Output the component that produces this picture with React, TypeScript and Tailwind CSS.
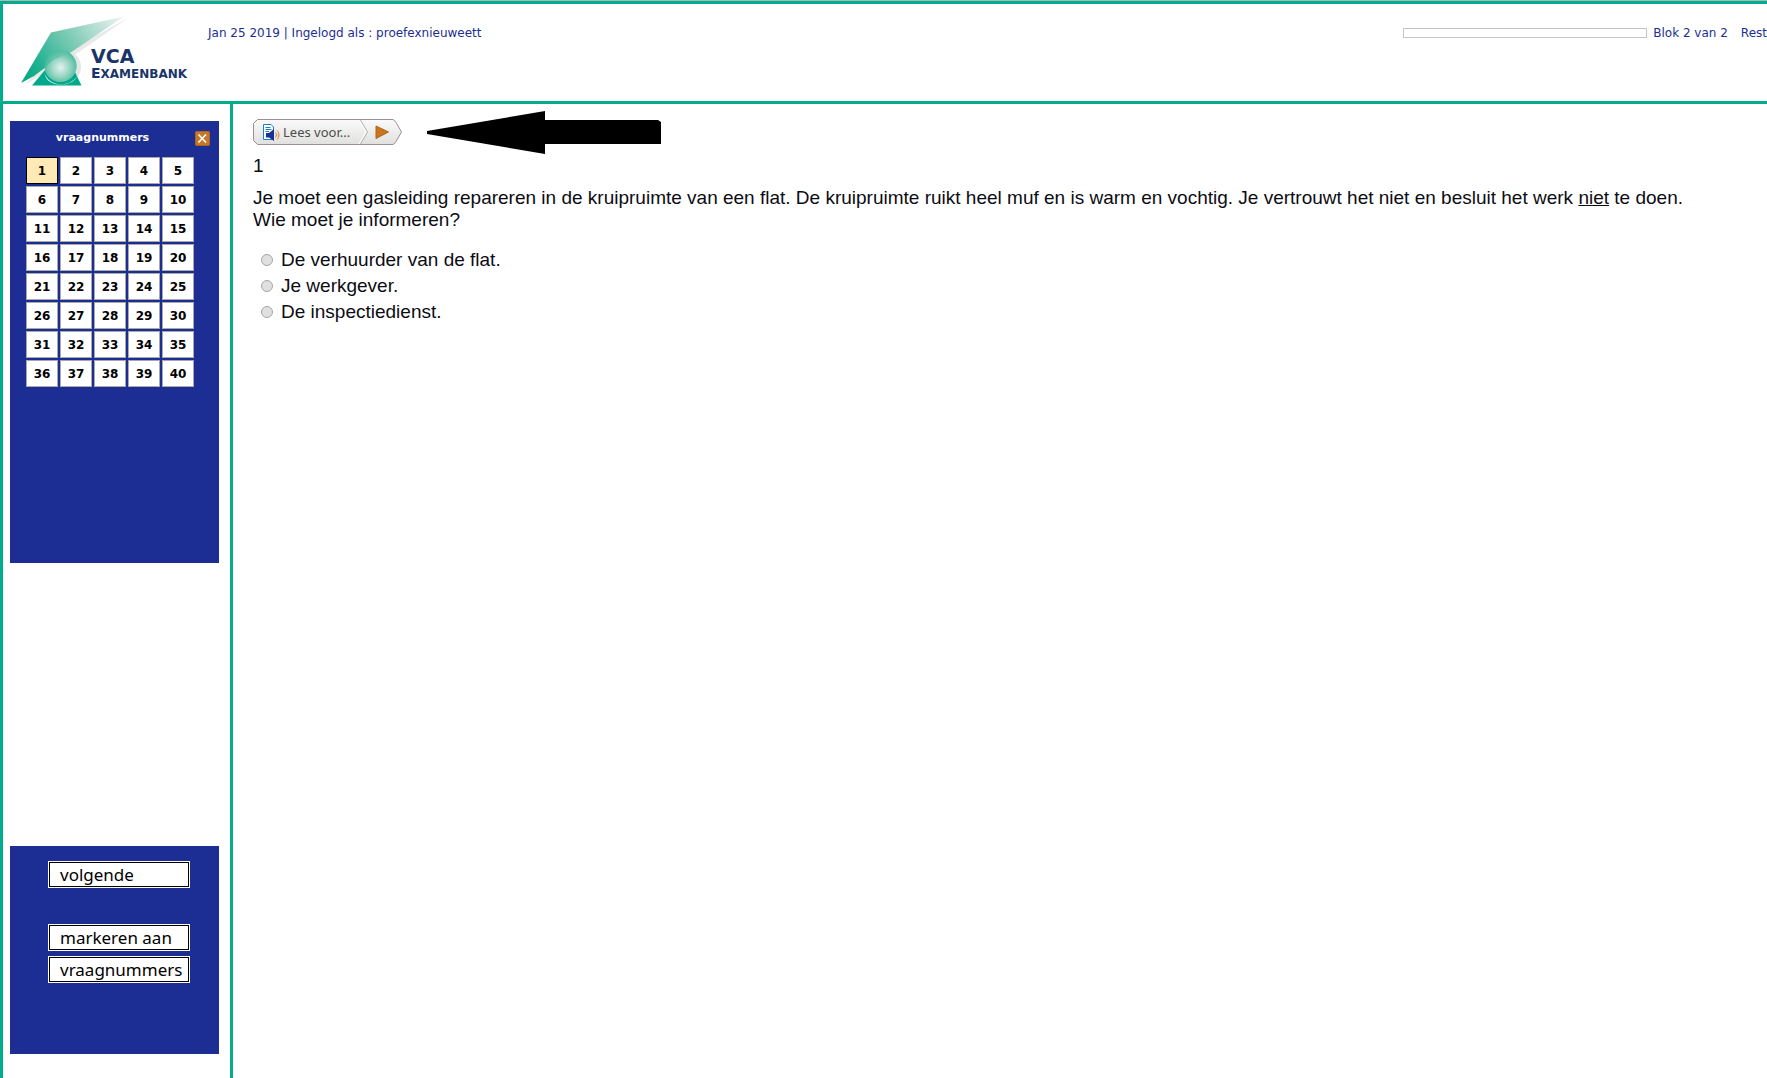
import { useState } from "react";

const questionNumbers = Array.from({ length: 40 }, (_, i) => i + 1);

const answers = [
  "De verhuurder van de flat.",
  "Je werkgever.",
  "De inspectiedienst.",
];

function Logo() {
  return (
    <svg
      role="img"
      aria-label="VCA Examenbank"
      width="176"
      height="78"
      viewBox="16 12 176 78"
      className="block shrink-0"
    >
      <defs>
        <linearGradient id="roof" gradientUnits="userSpaceOnUse" x1="24" y1="82" x2="120" y2="14">
          <stop offset="0" stopColor="#00a884" />
          <stop offset="0.2" stopColor="#22b292" />
          <stop offset="0.5" stopColor="#74c8b0" />
          <stop offset="0.8" stopColor="#bfe2d8" />
          <stop offset="1" stopColor="#eef5f3" />
        </linearGradient>
        <radialGradient id="ball" cx="0.5" cy="0.55" r="0.55">
          <stop offset="0" stopColor="#e2f3ee" />
          <stop offset="0.5" stopColor="#9dd6c5" />
          <stop offset="1" stopColor="#45b99d" />
        </radialGradient>
      </defs>
      <path d="M25 84.500 L45 64 L128 18 L79 52 L38 77 Z" fill="#e9e9e9" />
      <circle cx="64" cy="67" r="17" fill="#e2e7e6" />
      <path d="M32 85.500 L45 70 H74 L81.500 85.500 Z" fill="#00a98a" />
      <path d="M44 72 C49 88 72 89 80 72 L77 77 C71 87 52 87 46 78 Z" fill="#d5ece6" />
      <circle cx="60.500" cy="66" r="16" fill="url(#ball)" />
      <path d="M21 83 L51 32.500 L124 16.500 L73 51 C66 56 53 57 46 67 L34 76 Z" fill="url(#roof)" />
      <circle cx="60.500" cy="66" r="16" fill="url(#ball)" opacity="0.5" />
      <g fill="#1b3468" fontFamily="'DejaVu Sans', sans-serif">
        <text x="91" y="63" fontSize="19" fontWeight="700">VCA</text>
        <text x="91" y="78" fontSize="14" fontWeight="700">
          E<tspan fontSize="12">XAMENBANK</tspan>
        </text>
      </g>
    </svg>
  );
}

function Header() {
  return (
    <header className="flex h-[103px] items-start overflow-hidden border-y-3 border-[#00ae8e] pt-2 pl-[13px] text-[#1c2e93]">
      <Logo />
      <p className="mt-[13px] ml-[16px] text-[12px] leading-4 whitespace-nowrap">
        Jan 25 2019 | Ingelogd als : proefexnieuweett
      </p>
      <div className="mt-[13px] ml-auto flex items-center text-[12px] leading-4 whitespace-nowrap">
        <div
          role="progressbar"
          aria-label="Voortgang"
          aria-valuenow={0}
          className="mr-[6px] h-[10px] w-[244px] border border-[#c4c4c4]"
        />
        <span>Blok 2 van 2</span>
        <span className="ml-[13px]">Rest</span>
      </div>
    </header>
  );
}

function NumberPanel({ current, onSelect }: { current: number; onSelect: (n: number) => void }) {
  return (
    <section className="h-[442px] bg-[#1c2e93] pt-[9px]">
      <div className="flex items-center pr-[9px] text-white">
        <h2 className="flex-1 text-center text-[11px] leading-4 font-bold">vraagnummers</h2>
        <button type="button" aria-label="Sluiten" className="size-[15px] rounded-[2px] bg-[#c47828]">
          <svg viewBox="0 0 15 15" className="size-[15px]" fill="none">
            <rect x="0.500" y="0.500" width="14" height="14" rx="2" stroke="#a86420" />
            <path d="M3.500 3.500 L11 11.500 M11 3.500 L3.500 11.500" stroke="#fff" strokeWidth="1.600" />
          </svg>
        </button>
      </div>
      <div className="mt-[11px] ml-4 grid w-[168px] grid-cols-5 gap-[2px]">
        {questionNumbers.map((n) => (
          <button
            key={n}
            type="button"
            onClick={() => onSelect(n)}
            className={
              n === current
                ? "h-[27px] border border-black bg-[#ffe9b5] text-[12px] leading-4 font-bold text-black"
                : "h-[27px] border border-[#a9a9a9] bg-white text-[12px] leading-4 font-bold text-black"
            }
          >
            {n}
          </button>
        ))}
      </div>
    </section>
  );
}

function NavButton({ label }: { label: string }) {
  return (
    <button
      type="button"
      className="h-[27px] w-[142px] border border-white bg-black p-px text-left font-['Noto_Sans',Tahoma,sans-serif] text-[17px] text-black"
    >
      <span className="flex h-full items-center bg-white pl-[10px] leading-5">{label}</span>
    </button>
  );
}

function ReadAloudButton() {
  return (
    <button type="button" className="grid h-[26px] w-[149px] items-center">
      <svg viewBox="0 0 149 26" className="col-start-1 row-start-1 h-[26px] w-[149px]" fill="none">
        <defs>
          <linearGradient id="pill" x1="0" y1="0" x2="0" y2="1">
            <stop offset="0" stopColor="#fafafa" />
            <stop offset="1" stopColor="#e0e0de" />
          </linearGradient>
        </defs>
        <path d="M4.500 0.500 H140 L142.500 2.500 L148.500 13 L142.500 23.500 L140 25.500 H4.500 L0.500 21.500 V4.500 Z" fill="url(#pill)" stroke="#a08c92" />
        <path d="M107.500 1 L114.500 13 L107.500 25" stroke="#b5b0b2" />
        <path d="M106 1 L113 13 L106 25" stroke="#fff" />
        <path d="M123 7 L135.500 13 L123 19.500 Z" fill="#c9751c" stroke="#b0651c" />
        <path d="M10.500 5.500 H18 L20.500 8 V20.500 H10.500 Z" fill="#fff" stroke="#1b7fc4" />
        <path d="M12.500 8.500 H17.500 M12.500 10.500 H18.500 M12.500 12.500 H16" stroke="#1b7fc4" />
        <path d="M13 14 H16 L21 10 V22 L16 18.500 H13 Z" fill="#16309c" />
        <path d="M22.500 13.500 C23.700 15 23.700 17 22.500 18.500 M24 11.500 C26.500 14 26.500 18 24 20.500" stroke="#d07a20" />
      </svg>
      <span className="col-start-1 row-start-1 pl-[30px] text-left font-['Noto_Sans',sans-serif] text-[13px] leading-4 text-[#4c4c4c]">
        Lees voor...
      </span>
    </button>
  );
}

export default function App() {
  const [current, setCurrent] = useState(1);
  const [choice, setChoice] = useState("");

  return (
    <div className="flex min-h-screen flex-col border-t border-[#b4b4b4] bg-white font-['DejaVu_Sans',Verdana,sans-serif]">
      <div className="flex flex-1 flex-col border-l-3 border-[#00ae8e]">
        <Header />
        <div className="flex flex-1">
          <aside className="w-[230px] shrink-0 border-r-3 border-[#00ae8e] pt-[17px] pr-[11px] pb-4 pl-[7px]">
            <NumberPanel current={current} onSelect={setCurrent} />
            <nav aria-label="Navigatie" className="mt-[283px] flex h-[208px] flex-col items-start bg-[#1c2e93] pt-[15px] pl-[38px]">
              <NavButton label="volgende" />
              <div className="mt-9 flex flex-col gap-[5px]">
                <NavButton label="markeren aan" />
                <NavButton label="vraagnummers" />
              </div>
            </nav>
          </aside>
          <main className="min-w-0 flex-1 pl-5 font-['Liberation_Sans',Arial,sans-serif] text-[19px] leading-[22px] text-[#0c0c14]">
            <div className="flex items-start gap-[25px] pt-[7px]">
              <div className="pt-2">
                <ReadAloudButton />
              </div>
              <svg width="234" height="43" viewBox="0 0 234 43" aria-hidden="true">
                <path d="M0 20 L118 0 V9 H231 L234 11 V33 H118 V43 L0 23 Z" fill="#000" />
              </svg>
            </div>
            <h1 className="mt-px">{current}</h1>
            <p className="mt-[10px]">
              Je moet een gasleiding repareren in de kruipruimte van een flat. De kruipruimte ruikt heel muf en is
              warm en vochtig. Je vertrouwt het niet en besluit het werk <u>niet</u> te doen.
              <br />
              Wie moet je informeren?
            </p>
            <div role="radiogroup" aria-label="Antwoorden" className="mt-4 flex flex-col items-start pl-2">
              {answers.map((answer) => (
                <label key={answer} className="flex h-[26px] items-center gap-2">
                  <input
                    type="radio"
                    name="antwoord"
                    value={answer}
                    checked={choice === answer}
                    onChange={() => setChoice(answer)}
                    className="size-3 appearance-none rounded-full border border-[#a6a6a6] bg-[#e0e0e0] checked:bg-[#555]"
                  />
                  {answer}
                </label>
              ))}
            </div>
          </main>
        </div>
      </div>
    </div>
  );
}
